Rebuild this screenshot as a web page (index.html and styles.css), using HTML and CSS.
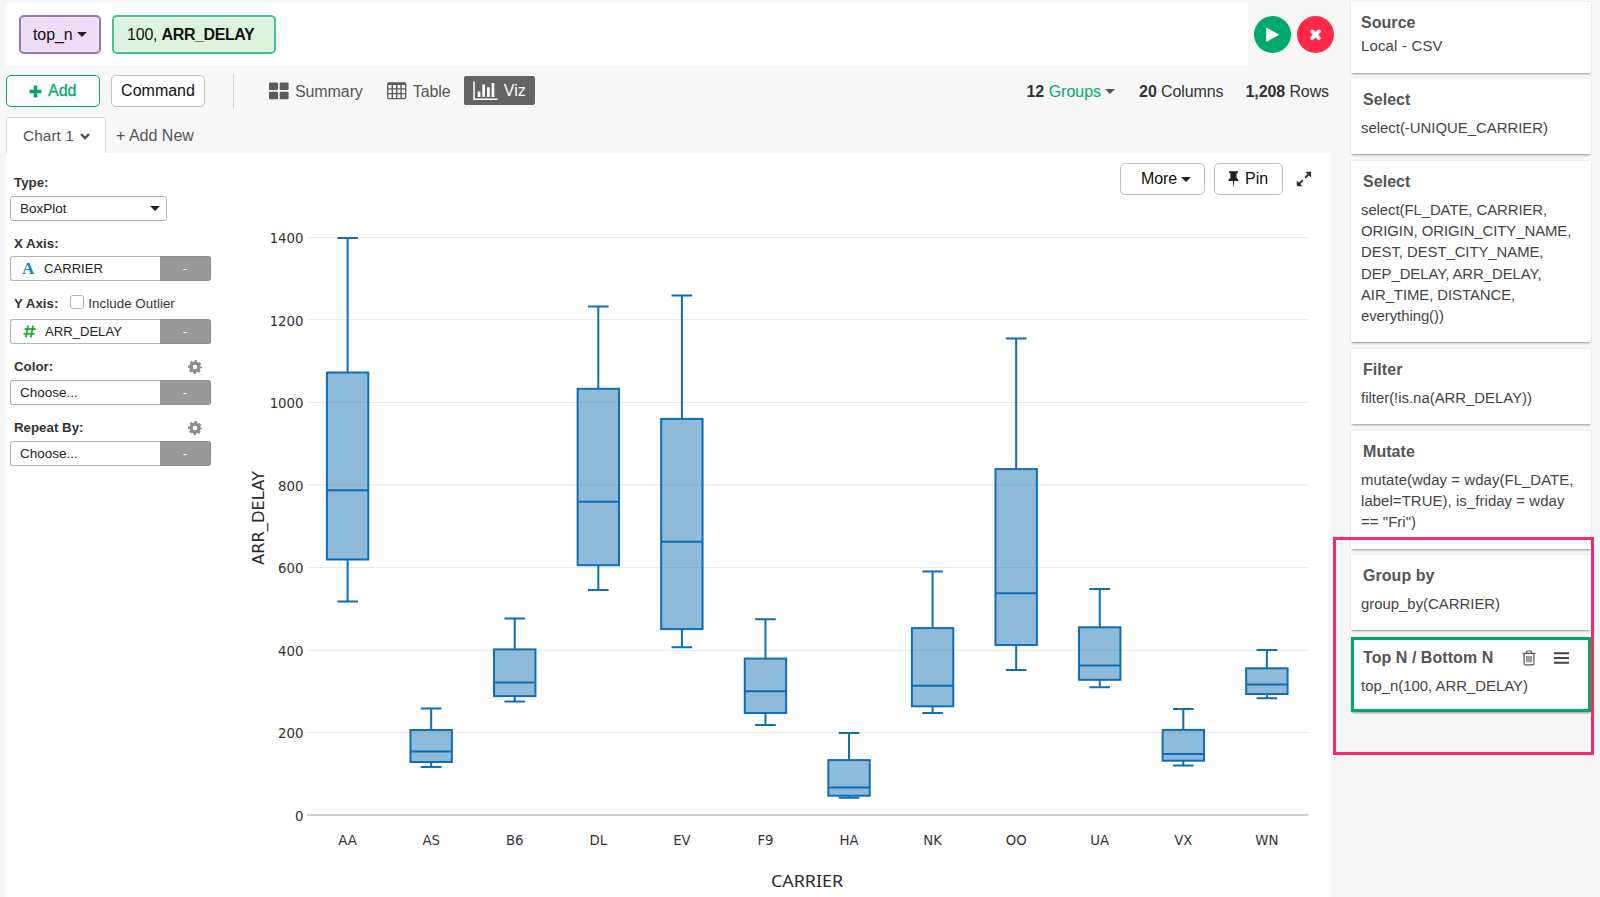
FILE: index.html
```html
<!DOCTYPE html>
<html lang="en">
<head>
<meta charset="utf-8">
<title>Flight delays - Viz</title>
<link rel="stylesheet" href="styles.css">
</head>
<body>
<div class="app">
  <main class="main">
    <header class="command-row">
      <div class="command-bar">
        <button class="token token-fn"><span class="fn-name">top_n</span><i class="caret"></i></button>
        <button class="token token-args">100, <b class="arg-name">ARR_DELAY</b></button>
      </div>
      <button class="round run" aria-label="Run"><svg width="37" height="37" viewBox="0 0 37 37"><path d="M12.2 11.5v14.4L25.2 18.7z" fill="#fff"/></svg></button>
      <button class="round cancel" aria-label="Cancel"><svg width="37" height="37" viewBox="0 0 37 37"><path d="M15.100 15.400l6.800 6.800M21.900 15.400l-6.800 6.800" stroke="#fff" stroke-width="3.800" stroke-linecap="round"/></svg></button>
    </header>

    <div class="toolbar">
      <button class="btn btn-add"><svg width="13" height="13" viewBox="0 0 13 13"><path d="M6.5 .5v12M.5 6.5h12" stroke="#00a968" stroke-width="3.6"/></svg><span>Add</span></button>
      <button class="btn btn-command">Command</button>
      <span class="divider"></span>
      <a class="view view-summary">
        <svg width="20" height="18" viewBox="0 0 20 18" fill="#5c5c5c"><rect x="0" y=".5" width="9" height="7.6" rx="1.3"/><rect x="10.6" y=".5" width="9" height="7.6" rx="1.3"/><rect x="0" y="9.7" width="9" height="7.6" rx="1.3"/><rect x="10.6" y="9.7" width="9" height="7.6" rx="1.3"/></svg>
        <span>Summary</span>
      </a>
      <a class="view view-table">
        <svg width="20" height="18" viewBox="0 0 20 18" fill="none" stroke="#5c5c5c"><rect x=".7" y="1" width="18" height="15.6" rx="1" stroke-width="1.3"/><path d="M1 2h17.5" stroke-width="2"/><path d="M1 6.9h17.5M1 11.6h17.5M5.3 2v14.5M9.7 2v14.5M14.1 2v14.5" stroke-width="1.4"/></svg>
        <span>Table</span>
      </a>
      <a class="view view-viz">
        <svg width="25" height="19" viewBox="0 0 25 19" fill="#fff"><path d="M.3.5h1.5v17H24.5V19H.3z"/><path d="M4.7 10.5h2.7v5.5H4.7zM9.3 3.5H12V16H9.3zM14 6.3h2.7V16H14zM18.6 2h2.7v14h-2.7z"/></svg>
        <span>Viz</span>
      </a>
      <div class="stats">
        <span class="stat-groups"><b>12</b> <em>Groups</em><i class="caret"></i></span>
        <span class="stat-columns"><b>20</b> Columns</span>
        <span class="stat-rows"><b>1,208</b> Rows</span>
      </div>
    </div>

    <nav class="tabs">
      <a class="tab"><span>Chart 1</span><svg width="12" height="9" viewBox="0 0 12 9"><path d="M2 2l4 4.2L10 2" fill="none" stroke="#555" stroke-width="2.4"/></svg></a>
      <a class="tab-new">+ Add New</a>
    </nav>

    <section class="panel">
      <form class="settings">
        <div class="label">Type:</div>
        <div class="select"><span>BoxPlot</span><i class="caret"></i></div>
        <div class="label label-x">X Axis:</div>
        <div class="field"><span class="value"><i class="kind-text">A</i><span class="column">CARRIER</span></span><span class="minus">-</span></div>
        <div class="label label-y">Y Axis:<span class="checkbox"></span><span class="plain">Include Outlier</span></div>
        <div class="field"><span class="value"><i class="kind-num"><svg width="13" height="13" viewBox="0 0 13 13"><path d="M5 .7L2.9 12.3M10 .7L7.9 12.3M1.6 4h11M.4 8.9h11" stroke="#2fa836" stroke-width="1.9" fill="none"/></svg></i><span class="column">ARR_DELAY</span></span><span class="minus">-</span></div>
        <div class="label label-color"><span>Color:</span><svg class="gear" width="14" height="14" viewBox="0 0 14 14"><circle cx="7" cy="7" r="3.9" fill="none" stroke="#8d8d8d" stroke-width="3.2"/><circle cx="7" cy="7" r="5.8" fill="none" stroke="#8d8d8d" stroke-width="2.2" stroke-dasharray="2.5 2.055" stroke-dashoffset="1.25"/></svg></div>
        <div class="field"><span class="value">Choose...</span><span class="minus">-</span></div>
        <div class="label label-repeat"><span>Repeat By:</span><svg class="gear" width="14" height="14" viewBox="0 0 14 14"><circle cx="7" cy="7" r="3.9" fill="none" stroke="#8d8d8d" stroke-width="3.2"/><circle cx="7" cy="7" r="5.8" fill="none" stroke="#8d8d8d" stroke-width="2.2" stroke-dasharray="2.5 2.055" stroke-dashoffset="1.25"/></svg></div>
        <div class="field"><span class="value">Choose...</span><span class="minus">-</span></div>
      </form>
      <div class="viz">
        <div class="viz-actions">
          <button class="btn btn-more"><span>More</span><i class="caret"></i></button>
          <button class="btn btn-pin"><svg width="11" height="16" viewBox="0 0 11 16"><path d="M1.2.3h8.6v2H8.6v4.9c1.3.7 2 1.6 2 2.8H6.1L5.7 15.7h-.4L4.9 10H.4c0-1.2.7-2.1 2-2.8V2.3H1.2z" fill="#222"/></svg><span>Pin</span></button>
          <svg class="expand" width="16" height="16" viewBox="0 0 16 16"><path d="M9.300.8h5.800v5.800zM6.600 15.200H.8V9.400z" fill="#333"/><path d="M13 2.900L9.200 6.700M6.700 9.300L2.900 13.100" stroke="#333" stroke-width="2"/></svg>
        </div>
        <svg class="chart" id="chart" width="1091" height="697" viewBox="240 200 1091 697"></svg>
      </div>
    </section>
  </main>

  <aside class="steps">
    <article class="step step-source"><h3>Source</h3><p>Local - CSV</p></article>
    <article class="step"><h3>Select</h3><p>select(-UNIQUE_CARRIER)</p></article>
    <article class="step step-6"><h3>Select</h3><p>select(FL_DATE, CARRIER,<br>ORIGIN, ORIGIN_CITY_NAME,<br>DEST, DEST_CITY_NAME,<br>DEP_DELAY, ARR_DELAY,<br>AIR_TIME, DISTANCE,<br>everything())</p></article>
    <article class="step"><h3>Filter</h3><p>filter(!is.na(ARR_DELAY))</p></article>
    <article class="step step-3"><h3>Mutate</h3><p>mutate(wday = wday(FL_DATE,<br>label=TRUE), is_friday = wday<br>== "Fri")</p></article>
    <article class="step"><h3>Group by</h3><p>group_by(CARRIER)</p></article>
    <article class="step step-active">
      <div class="step-head"><h3>Top N / Bottom N</h3>
        <svg width="14" height="16" viewBox="0 0 14 16" fill="none" stroke="#555" stroke-width="1.2"><path d="M.5 3.3h13M4.2 3.1L5 1h4l.8 2.1M2.1 3.3v9.9c0 .9.6 1.6 1.5 1.6h6.8c.9 0 1.5-.7 1.5-1.6V3.3M4.9 6v6.2M7 6v6.2M9.1 6v6.2"/></svg>
        <svg width="15" height="12" viewBox="0 0 15 12"><path d="M0 1.2h15M0 6h15M0 10.8h15" stroke="#444" stroke-width="2"/></svg>
      </div>
      <p>top_n(100, ARR_DELAY)</p>
    </article>
    <div class="highlight"></div>
  </aside>
</div>
<script src="chart.js"></script>
</body>
</html>
```

FILE: styles.css
```css
* { box-sizing: border-box; }
body { margin: 0; background: #f7f7f7; color: #333; font: 16px/18px "Liberation Sans", Arial, sans-serif; overflow: hidden; }
button { font: inherit; margin: 0; padding: 0; }
i, em { font-style: normal; }
.app { display: flex; width: 1600px; height: 897px; }
.main { flex: none; width: 1331px; padding: 3px 0 0 6px; display: flex; flex-direction: column; }
.caret { display: inline-block; border: solid transparent; border-width: 5px 5px 0; border-top-color: #222; }

.command-row { display: flex; height: 63px; }
.command-bar { flex: none; width: 1242px; background: #fff; padding: 12px 0 0 13px; display: flex; gap: 11px; margin-right: 6px; }
.token { height: 39px; border-radius: 5px; display: flex; align-items: center; color: #111; white-space: pre; box-shadow: inset 0 0 0 1px #fff8; }
.token-fn { width: 82px; border: 2px solid #9a70bc; background: #ecdcf6; padding-left: 12px; letter-spacing: -.1px; }
.token-fn .caret { margin-left: 4px; }
.token-args { width: 164px; border: 2px solid #45c48e; background: #def3de; padding-left: 13px; letter-spacing: -.2px; }
.arg-name { letter-spacing: -.4px; }
.round { flex: none; width: 37px; height: 37px; border: 0; border-radius: 50%; margin: 13px 6px 0 0; }
.round svg { display: block; }
.run { background: #00aa6c; }
.cancel { background: #ff2847; }

.toolbar { display: flex; height: 51px; padding-top: 9px; }
.btn { height: 32px; background: #fff; border: 1px solid #bfbfbf; border-radius: 5px; color: #111; display: flex; align-items: center; }
.btn-add { width: 94px; border-color: #00a968; color: #00a968; padding-left: 22px; gap: 6px; -webkit-text-stroke: .3px #00a968; }
.btn-command { width: 94px; margin-left: 11px; justify-content: center; }
.divider { width: 1px; height: 34px; margin: -1px 0 0 28px; background: #d2d2d2; }
.view { display: flex; align-items: center; height: 29px; color: #555; margin-top: 1px; }
.view span { position: relative; top: 1px; }
.view-summary { margin-left: 35px; gap: 6px; letter-spacing: -.1px; }
.view-table { margin-left: 24px; gap: 6px; width: 77px; letter-spacing: -.1px; }
.view-viz { width: 71px; background: #646464; color: #fff; border-radius: 2px; gap: 6px; padding-left: 9px; }
.view-viz span { top: 0; }
.stats { margin-left: auto; display: flex; padding: 8px 2px 0 0; color: #333; }
.stat-groups { margin-right: 24px; }
.stat-groups em { color: #00a968; }
.stat-groups .caret { border-top-color: #555; margin: 0 0 3px 4px; }
.stat-columns { margin-right: 22px; letter-spacing: -.1px; }
.stat-rows { letter-spacing: -.1px; }

.tabs { display: flex; height: 36px; color: #555; }
.tab { width: 100px; border: 1px solid #dadada; border-bottom: 0; background: #fff; border-radius: 2px 2px 0 0; padding: 9px 0 0 16px; font-size: 15.5px; white-space: nowrap; }
.tab svg { margin-left: 5px; }
.tab-new { padding: 10px 0 0 10px; }

.panel { flex: 1; background: #fff; display: flex; }
.settings { width: 234px; padding: 21px 0 0 4px; font-size: 13.5px; }
.label { font-weight: bold; font-size: 13.3px; height: 16px; line-height: 17px; padding-left: 4px; display: flex; color: #333; }
.select { width: 157px; height: 25px; margin-top: 6px; border: 1px solid #b4b4b4; border-radius: 3px; padding: 0 6px 0 9px; display: flex; align-items: center; justify-content: space-between; color: #222; }
.label-x { margin-top: 14px; }
.field { width: 201px; height: 25px; margin-top: 5px; display: flex; color: #222; }
.value { width: 150px; border: 1px solid #b4b4b4; border-right: 0; border-radius: 3px 0 0 3px; padding-left: 9px; display: flex; align-items: center; }
.minus { flex: 1; background: #999; border: 1px solid #8c8c8c; border-left: 0; border-radius: 0 3px 3px 0; color: #fff; line-height: 23px; text-align: center; }
.kind-text { width: 24px; padding-left: 2px; color: #1482cc; font: bold 17px "Liberation Serif", serif; }
.kind-num { width: 25px; padding-left: 3px; display: flex; }
.column { font-size: 13.1px; }
.label-y { margin-top: 14px; }
.checkbox { width: 14px; height: 14px; margin: 0 4px 0 12px; border: 1px solid #b4b4b4; border-radius: 3px; }
.plain { font-weight: normal; letter-spacing: .05px; }
.label-y + .field { margin-top: 8px; }
.label-color { margin-top: 14px; }
.label-color + .field, .label-repeat + .field { margin-top: 6px; }
.label-repeat { margin-top: 14px; }
.label-color, .label-repeat { justify-content: space-between; width: 192px; }
.gear { margin-top: 2px; }
.viz { width: 1091px; }
.viz-actions { height: 47px; padding: 10px 19px 0 0; display: flex; justify-content: flex-end; }
.btn-more { width: 85px; padding-left: 20px; gap: 4px; letter-spacing: -.1px; }
.btn-pin { width: 69px; margin-left: 9px; padding-left: 13px; gap: 6px; }
.expand { margin: 8px 0 0 13px; }
.chart { display: block; }
.grid { stroke: #e9e9e9; }
.zero { stroke: #d0d0d0; stroke-width: 2; }
.tick { font: 13.3px "DejaVu Sans", Verdana, sans-serif; fill: #333; }
.axis-title { font: 16px "DejaVu Sans", Verdana, sans-serif; fill: #2a2a2a; }
.axis-title-x { font-family: "Noto Sans", Verdana, sans-serif; }
.box { fill: rgba(31, 119, 184, .5); stroke: #0f6eb5; stroke-width: 2; }
.whisker { fill: none; stroke: #0f6eb5; stroke-width: 2; }

.steps { position: relative; width: 269px; padding: 2px 9px 0 20px; }
.step { height: 75px; margin-bottom: 6.6px; padding: 11px 0 0 10px; background: #fff; box-shadow: 0 2px 2px -1px #999, 0 0 2px #ddd; }
.step h3 { margin: 0 0 8px 2px; font-size: 16px; line-height: 20px; color: #555; letter-spacing: .05px; }
.step p { margin: 0; font-size: 14.9px; line-height: 21.35px; color: #444; white-space: nowrap; }
.step-source { height: 70.5px; }
.step-source h3 { margin: 0 0 3px; }
.step-source p { letter-spacing: .2px; }
.step-6 { height: 181.8px; }
.step-6 p { letter-spacing: -.06px; }
.step-3 { height: 118px; }
.step-3 p { letter-spacing: .08px; }
.step-active { border: 3px solid #00a968; padding: 8px 0 0 7px; }
.step-head { display: flex; align-items: flex-start; }
.step-head svg:nth-of-type(1) { margin: 2px 0 0 auto; }
.step-head svg:nth-of-type(2) { margin: 4px 19px 0 18px; }
.highlight { position: absolute; left: 2px; top: 537px; width: 261px; height: 218px; border: 3px solid #fc2867; }
```

FILE: chart.js
```js
const chart = document.getElementById('chart');
const NS = 'http://www.w3.org/2000/svg';

function add(name, attrs, text) {
  const el = document.createElementNS(NS, name);
  for (const key in attrs) el.setAttribute(key, attrs[key]);
  if (text !== undefined) el.textContent = text;
  chart.appendChild(el);
}

// Each row: carrier, then y of max, third quartile, median, first quartile, min.
const boxes = [
  ['AA', 238, 372.5, 490.2, 559.5, 601.5],
  ['AS', 708.4, 730, 751.4, 762, 767],
  ['B6', 618.5, 649.4, 682.5, 696.1, 701.4],
  ['DL', 306.4, 388.8, 501.8, 565.2, 590],
  ['EV', 295.4, 418.9, 541.8, 629.1, 647.2],
  ['F9', 619.3, 658.6, 691.2, 713, 725],
  ['HA', 732.9, 760.1, 787.4, 795.7, 797.7],
  ['NK', 571.4, 628.1, 685.8, 706.3, 713],
  ['OO', 338.6, 469.1, 593.2, 645, 670],
  ['UA', 588.9, 627.3, 665.6, 679.8, 687.2],
  ['VX', 708.9, 729.9, 754, 760.7, 765.4],
  ['WN', 649.9, 668.3, 684.4, 694, 698.2]
];

const gridY = [815, 732.5, 650.3, 567.5, 484.9, 402.5, 319.5, 237.5];

gridY.forEach((y, i) => {
  add('path', { class: i ? 'grid' : 'zero', d: `M307 ${y}H1308.5` });
  add('text', { class: 'tick', x: 303.5, y: 821 - i * 82.55, 'text-anchor': 'end' }, i * 200);
});

boxes.forEach(([name, hi, q3, med, q1, lo], i) => {
  const x = 347.6 + i * 83.57;
  add('rect', { class: 'box', x: x - 20.7, y: q3, width: 41.4, height: q1 - q3 });
  add('path', {
    class: 'whisker',
    d: `M${x - 20.7} ${med}h41.4M${x} ${q3}V${hi}M${x} ${q1}V${lo}M${x - 10.3} ${hi}h20.6M${x - 10.3} ${lo}h20.6`
  });
  add('text', { class: 'tick', x, y: 845, 'text-anchor': 'middle' }, name);
});

add('text', { class: 'axis-title', x: 0, y: 0, transform: 'translate(263.5 565) rotate(-90)', textLength: 94, lengthAdjust: 'spacingAndGlyphs' }, 'ARR_DELAY');
add('text', { class: 'axis-title axis-title-x', x: 771, y: 887, textLength: 72, lengthAdjust: 'spacingAndGlyphs' }, 'CARRIER');
```
